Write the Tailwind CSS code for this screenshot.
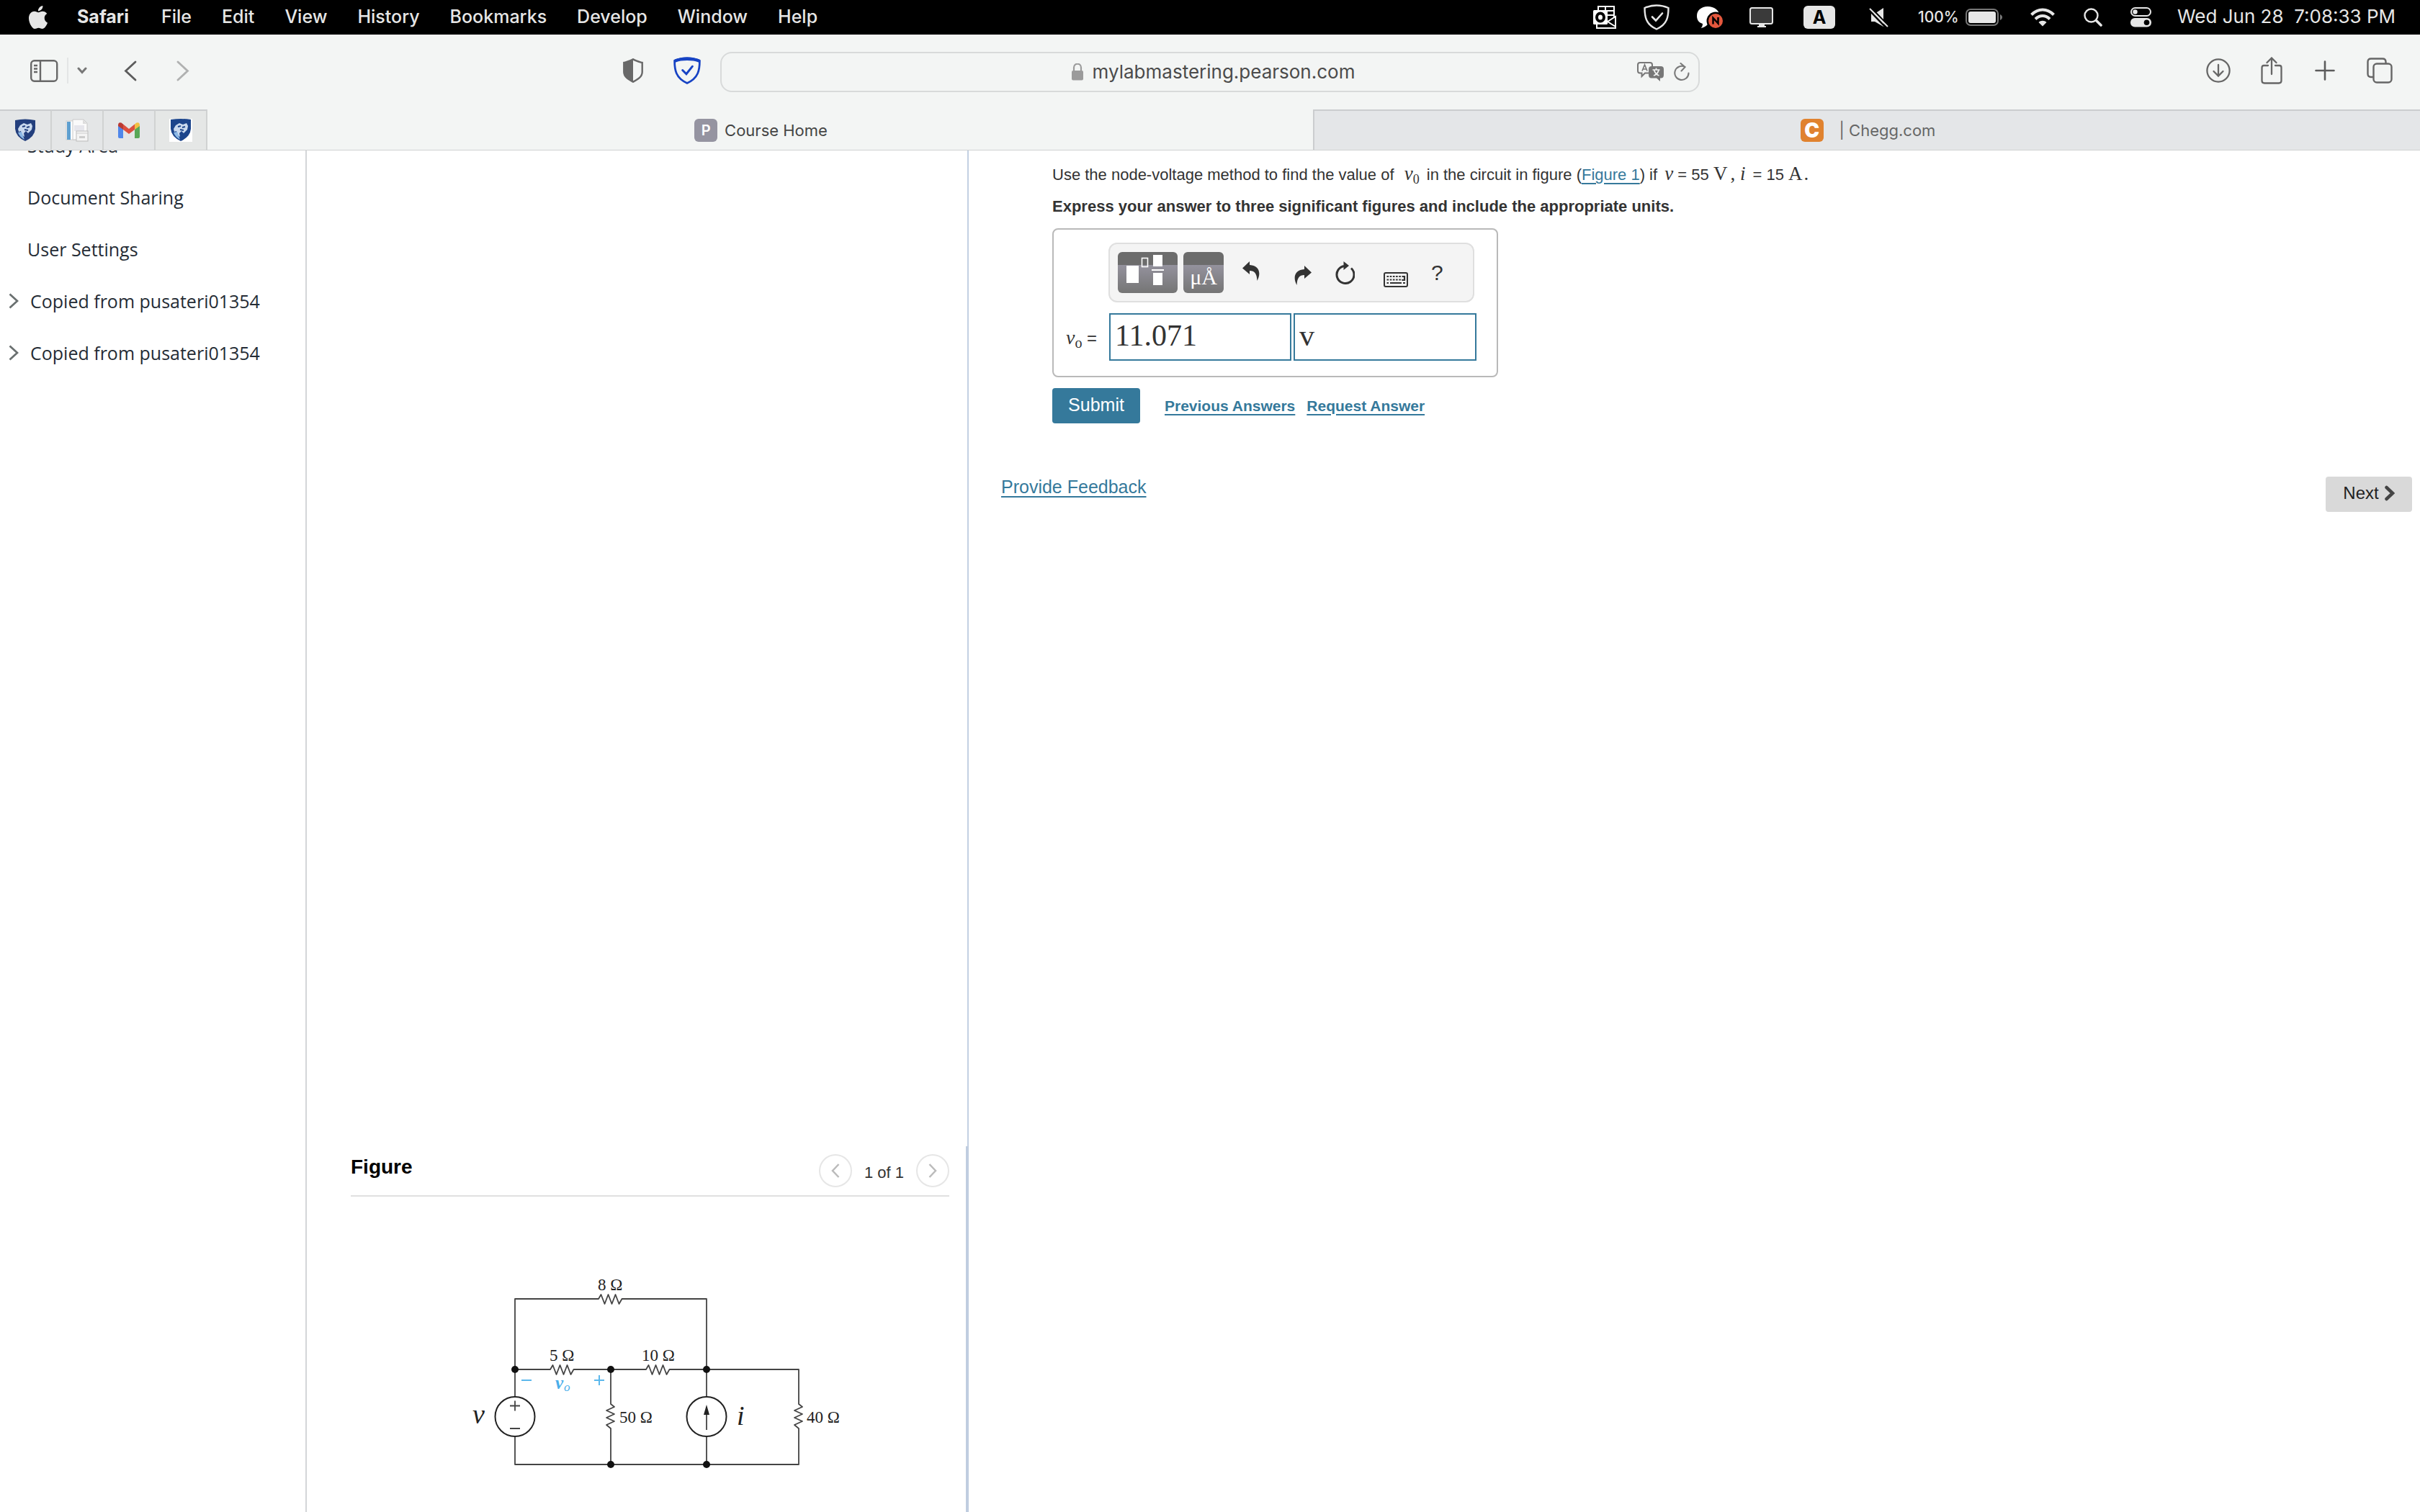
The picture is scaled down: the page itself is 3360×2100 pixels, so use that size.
<!DOCTYPE html>
<html lang="en">
<head>
<meta charset="utf-8">
<title>Course Home</title>
<script src="https://cdn.jsdelivr.net/npm/@tailwindcss/browser@4"></script>
</head>
<body class="min-h-screen flex flex-col bg-white font-['Liberation_Sans',sans-serif] text-[#333]">

<!-- System menu bar -->
<header class="h-12 bg-black text-[#e6e6e6] flex items-center pl-[37px] pr-8 font-['Inter',sans-serif] text-[26px] leading-[46px] whitespace-pre">
  <svg class="size-8 mr-[38px]" viewBox="0 0 24 24" fill="#e6e6e6"><path d="M12.152 6.896c-.948 0-2.415-1.078-3.96-1.04-2.04.027-3.91 1.183-4.961 3.014-2.117 3.675-.546 9.103 1.519 12.09 1.013 1.454 2.208 3.09 3.792 3.039 1.52-.065 2.09-.987 3.935-.987 1.831 0 2.35.987 3.96.948 1.637-.026 2.676-1.48 3.676-2.948 1.156-1.688 1.636-3.325 1.662-3.415-.039-.013-3.182-1.221-3.22-4.857-.026-3.04 2.48-4.494 2.597-4.559-1.429-2.09-3.623-2.324-4.39-2.376-2-.156-3.675 1.09-4.61 1.09zM15.53 3.83c.843-1.012 1.4-2.427 1.245-3.83-1.207.052-2.662.805-3.532 1.818-.78.896-1.454 2.338-1.273 3.714 1.338.104 2.715-.688 3.559-1.701"/></svg>
  <nav class="flex gap-[42px] pb-0.5 text-[25px] font-medium" aria-label="Menu bar"><button class="mr-[3px] font-bold">Safari</button><button>File</button><button>Edit</button><button>View</button><button>History</button><button>Bookmarks</button><button>Develop</button><button>Window</button><button>Help</button></nav>
  <div class="ml-auto flex items-center">
    <svg class="w-8 h-8 mr-[38px]" viewBox="0 0 32 32" fill="none" stroke="#fff" stroke-width="2"><path d="M7 7V1H29V16M17 1V14M18 7H29M19 13H29M5 25V31H31V15L20 22L31 29M20 22L15 25"/><rect x="0" y="6" width="20" height="20" rx="1.5" fill="#fff" stroke="none"/><ellipse cx="10" cy="16" rx="5" ry="5.500" stroke="#000" stroke-width="4"/></svg>
    <svg class="w-9 h-9 mr-[38px]" viewBox="0 0 36 36" fill="none" stroke="#e6e6e6" stroke-width="2.4" stroke-linecap="round"><path d="M18 1.500C12 1.500 6 3 1.500 5C1.500 17 3 28 18 34.500C33 28 34.500 17 34.500 5C30 3 24 1.500 18 1.500Z"/><path d="M12 17.500L17 22.500L26 12.500" stroke-width="2.600"/></svg>
    <svg class="w-9 h-8 mr-[37px]" viewBox="0 0 36 32"><path d="M15 1C6 1 0 6.500 0 14C0 20 3 23.500 8 25C8 28 7 30 5.500 31C10 30.500 13 28 15 26C25 25 31 20 31 13C31 6 24 1 15 1Z" fill="#fff"/><circle cx="26" cy="21" r="12.500" fill="#000"/><circle cx="26" cy="21" r="10" fill="#e4573d"/><path d="M22.500 25.500V17L29.500 24.500V16" fill="none" stroke="#000" stroke-width="2.500"/></svg>
    <svg class="w-[33px] h-7 mr-[42px]" viewBox="0 0 33 28"><rect x="1" y="1" width="31" height="22" rx="2.500" fill="#3a3a3a" stroke="#e6e6e6" stroke-width="2"/><path d="M13 24H21V26H23V28H11V26H13Z" fill="#e6e6e6"/></svg>
    <span class="w-11 h-8 mr-[47px] rounded-md bg-[#e6e6e6] text-black font-bold text-[25px] leading-8 text-center">A</span>
    <svg class="w-[27px] h-[27px] mr-[41px]" viewBox="0 0 27 27"><path d="M3 8H8L20 0V26L8 19H3Z" fill="#e6e6e6"/><path d="M-1 2L24 28M2 -1L28 26" stroke="#000" stroke-width="2.500"/><path d="M1 1L26 26" stroke="#e6e6e6" stroke-width="2"/></svg>
    <span class="w-[66px] text-[21px] font-medium">100%</span>
    <svg class="w-[52px] h-6 mr-[38px]" viewBox="0 0 52 24"><rect x="1" y="1" width="44" height="22" rx="6" fill="none" stroke="#777" stroke-width="2"/><rect x="4" y="4" width="38" height="16" rx="3" fill="#e6e6e6"/><path d="M48 8C52 9.500 52 14.500 48 16Z" fill="#777"/></svg>
    <svg class="w-[34px] h-[26px] mr-10" viewBox="0 0 34 26" fill="none" stroke="#e6e6e6" stroke-width="4"><path d="M1.500 9.500C10.500 0 23.500 0 32.500 9.500"/><path d="M7 15.500C13 9.500 21 9.500 27 15.500"/><path d="M11.500 20C14.500 17 19.500 17 22.500 20L17 25.500Z" fill="#e6e6e6" stroke="none"/></svg>
    <svg class="w-[26px] h-[26px] mr-[39px]" viewBox="0 0 26 26" fill="none" stroke="#e6e6e6" stroke-linecap="round"><circle cx="10.500" cy="10.500" r="9" stroke-width="2.400"/><path d="M17.500 17.500L24 24" stroke-width="3.600"/></svg>
    <svg class="w-[29px] h-7 mr-9" viewBox="0 0 29 28"><rect x="1" y="1" width="27" height="11" rx="5.500" fill="none" stroke="#e6e6e6" stroke-width="2"/><circle cx="6.500" cy="6.500" r="3.200" fill="#e6e6e6"/><rect x="0" y="15" width="29" height="12.500" rx="6" fill="#e6e6e6"/><circle cx="22.500" cy="21.200" r="3.800" fill="#000"/></svg>
    <time class="w-[305px] pb-0.5 text-[26px]">Wed Jun 28  7:08:33 PM</time>
  </div>
</header>

<!-- Browser toolbar -->
<div class="h-26 bg-[#f3f5f4] grid grid-cols-[1fr_40.5%_1fr] items-center text-[#666]">
  <div class="flex items-center pl-[42px] pr-[27px] pb-1">
    <button aria-label="Sidebar"><svg class="w-[39px] h-[31px]" viewBox="0 0 39 31" fill="none" stroke="#686868" stroke-width="2.400"><rect x="1.200" y="1.200" width="36" height="28.500" rx="4.500"/><path d="M14 1V30M5 8H10M5 12.500H10M5 17H10"/></svg></button>
    <span class="w-0.5 h-9 bg-[#e3e5e5] ml-3"></span>
    <button class="ml-3" aria-label="Tab groups"><svg class="w-[14px] h-[10px]" viewBox="0 0 14 10" fill="none" stroke="#777" stroke-width="3" stroke-linecap="round"><path d="M2 2L7 7.500L12 2"/></svg></button>
    <button class="ml-[51px]" aria-label="Back"><svg class="w-[18px] h-[29px]" viewBox="0 0 18 29" fill="none" stroke="#5c5c5c" stroke-width="2.800" stroke-linecap="round"><path d="M16 2L2.500 14.500L16 27"/></svg></button>
    <button class="ml-[55px]" aria-label="Forward"><svg class="w-[18px] h-[29px]" viewBox="0 0 18 29" fill="none" stroke="#b0b1b1" stroke-width="2.800" stroke-linecap="round"><path d="M2 2L15.500 14.500L2 27"/></svg></button>
    <button class="ml-auto" aria-label="Privacy report"><svg class="w-[28px] h-[34px]" viewBox="0 0 28 34"><path d="M14 1.300C10 4 5 5 1.300 6V19C1.300 26 8 29.500 14 32.700C20 29.500 26.700 26 26.700 19V6C23 5 18 4 14 1.300Z" fill="none" stroke="#686868" stroke-width="2.400"/><path d="M14 1V33C8 30 1 26 1 19V6C5 5 10 4 14 1Z" fill="#686868"/></svg></button>
    <button class="ml-[42px]" aria-label="AdGuard"><svg class="w-[38px] h-[38px]" viewBox="0 0 36 36" fill="none" stroke="#1743c4" stroke-width="2.600" stroke-linecap="round"><path d="M18 1.500C12 1.500 6 3 1.500 5C1.500 17 3 28 18 34.500C33 28 34.500 17 34.500 5C30 3 24 1.500 18 1.500Z"/><path d="M3 5C10 2 26 2 33 5" stroke-width="4"/><path d="M12 17.500L17 22.500L25 12.500" stroke-width="2.800"/></svg></button>
  </div>
  <div class="h-14 border-2 border-[#d8dada] rounded-2xl flex items-center pr-3 text-[#4b4b4b]">
    <label for="address" class="ml-[486px] shrink-0" aria-label="Address"><svg class="w-4 h-6" viewBox="0 0 16 24"><rect x="0" y="10" width="16" height="13.500" rx="2" fill="#9b9b9b"/><path d="M3 10V6C3 -1 13 -1 13 6V10" fill="none" stroke="#9b9b9b" stroke-width="2.200"/></svg></label>
    <input id="address" value="mylabmastering.pearson.com" class="ml-[13px] min-w-0 flex-1 bg-transparent outline-none font-['Inter',sans-serif] text-[26px] leading-10">
    <button aria-label="Translate"><svg class="w-[37px] h-[28px]" viewBox="0 0 37 28"><path d="M16 15.500H11L6.500 20V15.500H4Q1 15.500 1 12.500V4Q1 1 4 1H18Q21 1 21 4V6" fill="none" stroke="#777" stroke-width="2"/><path d="M7 12.500L10.500 4L14 12.500M8 10H13" fill="none" stroke="#777" stroke-width="1.700"/><path d="M20 6H33Q37 6 37 10V18Q37 22.500 33 22.500H32V27L27 22.500H20Q16 22.500 16 18V10Q16 6 20 6Z" fill="#777"/><path d="M21.500 11H31.500M26.500 8.500V11M23 19Q29 17 30 11M30.500 19Q25 17 23.500 11" fill="none" stroke="#f3f5f4" stroke-width="1.700"/></svg></button>
    <button class="ml-[14px]" aria-label="Reload"><svg class="w-[22px] h-[26px]" viewBox="0 0 22 26" fill="none" stroke="#7a7a7a" stroke-width="2.100" stroke-linecap="round"><path d="M15.500 6A9.600 9.600 0 1 0 20.500 14.500M9.500 1L15.500 6.200L10.500 11.500"/></svg></button>
  </div>
  <div class="flex items-center justify-end pr-[38px] pb-1">
    <button aria-label="Downloads"><svg class="w-[34px] h-[34px]" viewBox="0 0 34 34" fill="none" stroke="#666" stroke-width="2.300" stroke-linecap="round"><circle cx="17" cy="17" r="15.600"/><path d="M17 9V24M10.500 18L17 24.500L23.500 18"/></svg></button>
    <button class="ml-[42px]" aria-label="Share"><svg class="w-[30px] h-[38px]" viewBox="0 0 30 38" fill="none" stroke="#666" stroke-width="2.300" stroke-linecap="round"><path d="M10 12H4Q1.500 12 1.500 15V33Q1.500 36.500 5 36.500H25Q28.500 36.500 28.500 33V15Q28.500 12 26 12H20M15 24V2M8.500 8L15 1.500L21.500 8"/></svg></button>
    <button class="ml-[45px]" aria-label="New tab"><svg class="w-[28px] h-[28px]" viewBox="0 0 28 28" fill="none" stroke="#5c5c5c" stroke-width="2.600" stroke-linecap="round"><path d="M14 1.500V26.500M1.500 14H26.500"/></svg></button>
    <button class="ml-[44px]" aria-label="Tab overview"><svg class="w-[36px] h-[36px]" viewBox="0 0 36 36" fill="none" stroke="#666" stroke-width="2.400"><path d="M9 27H6Q1.500 27 1.500 22.500V6Q1.500 1.500 6 1.500H22Q26.500 1.500 26.500 6V8"/><rect x="9.500" y="8.500" width="25" height="26" rx="4.500"/></svg></button>
  </div>
</div>

<!-- Tab strip -->
<nav class="h-[57px] flex border-b border-[#d0d2d2] bg-[#f3f5f4] font-['Inter',sans-serif] text-[22px] text-[#454545]" aria-label="Tabs">
  <a href="#" aria-label="Penn State" class="w-18 flex items-center justify-center border-t-2 border-t-[#cbcdcf] border-r-2 border-r-[#d0d2d2] bg-[#e4e6e7]"><svg class="size-8" viewBox="0 0 32 32"><path d="M2 2Q16 -1 30 2V14Q29 25 16 31Q3 25 2 14Z" fill="#233f7d"/><path d="M6 14L9 9L14 6L19 8L24 6L26 10L25 15L20 20L17 17L14 20L15 25L11 22L10 17L7 18Z" fill="#c9d9ee"/><path d="M12 11L16 10M18 12L22 11M15 15L20 16" stroke="#233f7d" stroke-width="2"/><path d="M6 19L11 18L15 29Q8 25 6 19Z" fill="#8cb9e6"/></svg></a>
  <a href="#" aria-label="Documents" class="w-18 flex items-center justify-center border-t-2 border-t-[#cbcdcf] border-r-2 border-r-[#d0d2d2] bg-[#e4e6e7]"><svg class="size-8" viewBox="0 0 32 32"><rect x="1" y="3" width="15" height="26" fill="#fff" stroke="#ccc"/><rect x="2" y="4" width="5" height="25" fill="#5fa0d0"/><path d="M10 1H25L30 6V29H10Z" fill="#fafafa" stroke="#c8c8c8"/><path d="M24 1V7H30" fill="#ddd"/><rect x="12" y="9" width="14" height="8" fill="#e6e6ec"/><rect x="15" y="17" width="16" height="14" fill="#f4f4f4" stroke="#bbb"/><path d="M15 20H31" stroke="#ccc"/><rect x="19" y="24" width="8" height="3" fill="#ccc"/></svg></a>
  <a href="#" aria-label="Gmail" class="w-18 flex items-center justify-center border-t-2 border-t-[#cbcdcf] border-r-2 border-r-[#d0d2d2] bg-[#e4e6e7]"><svg class="w-[30px] h-[22px]" viewBox="0 0 30 22"><path d="M0 4L7 9V22H2Q0 22 0 20Z" fill="#5087ea"/><path d="M30 4L23 9V22H28Q30 22 30 20Z" fill="#59a758"/><path d="M7 2.500L15 9L23 2.500V10L15 16L7 10Z" fill="#dc5040"/><path d="M7 10V2.500L4.500 .5Q0 -1 0 4V5Z" fill="#b93a33"/><path d="M23 10V2.500L25.500 .5Q30 -1 30 4V5Z" fill="#f2c043"/></svg></a>
  <a href="#" aria-label="Penn State" class="w-18 flex items-center justify-center border-t-2 border-t-[#cbcdcf] border-r-2 border-r-[#d0d2d2] bg-[#e5e7e6]"><svg class="size-8 bg-white" viewBox="0 0 32 32"><path d="M2 1Q16 -1 30 1V14Q29 25 16 31Q3 25 2 14Z" fill="#1c458c"/><path d="M6 14L9 9L14 6L19 8L24 6L26 10L25 15L20 20L17 17L14 20L15 25L11 22L10 17L7 18Z" fill="#c9d9ee"/><path d="M12 11L16 10M18 12L22 11M15 15L20 16" stroke="#1c458c" stroke-width="2"/><path d="M6 19L11 18L15 29Q8 25 6 19Z" fill="#8cb9e6"/></svg></a>
  <a href="#" class="flex-1 flex items-center justify-center gap-[10px] pl-0.5 pt-0.5"><span class="size-8 rounded-md bg-[#9594a1] text-white text-[20px] leading-8 font-semibold text-center">P</span>Course Home</a>
  <a href="#" class="flex-1 flex items-center justify-center gap-[22px] pl-0.5 border-t-2 border-t-[#cbcdcf] border-l-2 border-l-[#cbcdcf] bg-[#e4e6e8] text-[#666]"><span class="size-8 rounded-md bg-[#e0822f] text-white text-[28px] leading-8 font-black text-center">C</span>| Chegg.com</a>
</nav>

<!-- Page -->
<div class="flex-1 flex">
  <aside class="w-[426px] shrink-0 border-r-2 border-[#d4d6d8] overflow-hidden">
    <nav class="-mt-[43px] flex flex-col font-['Open_Sans',sans-serif] text-[25px] leading-[72px] text-[#252c35]" aria-label="Course">
      <a href="#" class="pl-[38px]">Study Area</a>
      <a href="#" class="pl-[38px]">Document Sharing</a>
      <a href="#" class="pl-[38px]">User Settings</a>
      <a href="#" class="pl-3 flex items-center gap-4"><svg class="w-[14px] h-[22px]" viewBox="0 0 14 22" fill="none" stroke="#6a7070" stroke-width="2.800"><path d="M1.500 1.500L12 11L1.500 20.500"/></svg>Copied from pusateri01354</a>
      <a href="#" class="pl-3 flex items-center gap-4"><svg class="w-[14px] h-[22px]" viewBox="0 0 14 22" fill="none" stroke="#6a7070" stroke-width="2.800"><path d="M1.500 1.500L12 11L1.500 20.500"/></svg>Copied from pusateri01354</a>
    </nav>
  </aside>

  <section class="w-[919px] shrink-0 flex flex-col justify-end bg-[linear-gradient(#c3d0e2,#c3d0e2)] bg-[length:2px_100%] bg-right bg-no-repeat" aria-label="Figure">
    <div class="h-[508px] border-r-4 border-[#c0cde0] pl-[61px] pr-[23px]">
      <div class="h-[70px] flex items-center border-b-2 border-[#e0e0e0]">
        <h2 class="text-[28px] leading-8 font-bold text-black mb-2.5">Figure</h2>
        <button class="ml-auto size-[46px] rounded-full border-2 border-[#e6e6e6] flex items-center justify-center" aria-label="Previous figure"><svg class="w-3 h-5" viewBox="0 0 12 20" fill="none" stroke="#bbb" stroke-width="2.500"><path d="M10.500 1L2 10L10.500 19"/></svg></button>
        <span class="mx-[17px] mt-1.5 text-[22px] leading-7">1 of 1</span>
        <button class="size-[46px] rounded-full border-2 border-[#e6e6e6] flex items-center justify-center" aria-label="Next figure"><svg class="w-3 h-5" viewBox="0 0 12 20" fill="none" stroke="#bbb" stroke-width="2.500"><path d="M1.500 1L10 10L1.500 19"/></svg></button>
      </div>
      <!-- Circuit diagram -->
      <svg class="ml-[153px] mt-[98px] w-[540px] h-[300px] font-['Liberation_Serif',serif] text-[23px]" viewBox="640 1760 540 300" fill="#222" role="img" aria-label="Circuit with two sources and five resistors">
        <g fill="none" stroke="#444" stroke-width="1.800" stroke-linejoin="round">
          <path d="M715 1940V1804H831l3.500-6 5 13 5-13 5 13 5-13 5 13 4-7H981V1940"/>
          <path d="M715 1902H764l3.500-6 5 13 5-13 5 13 5-13 5 13 4-7H897l3.500-6 5 13 5-13 5 13 5-13 5 13 4-7H1109V1950l5 4-11 5 11 5-11 5 11 5-11 5 6 5V2034H715V1995"/>
          <path d="M848 1902V1950l5 4-11 5 11 5-11 5 11 5-11 5 6 5V2034M981 1995V2034"/>
          <circle cx="715" cy="1967.500" r="27.500" stroke="#222" stroke-width="2"/>
          <circle cx="981" cy="1967.500" r="27.500" stroke="#222" stroke-width="2"/>
          <path d="M708 1952.500H722M715 1945.500V1959.500M708 1984H722M981 1986V1960"/>
        </g>
        <path d="M981 1951L985 1965H977Z"/>
        <g fill="#111"><circle cx="715" cy="1902" r="5"/><circle cx="848" cy="1902" r="5"/><circle cx="981" cy="1902" r="5"/><circle cx="848" cy="2034" r="5"/><circle cx="981" cy="2034" r="5"/></g>
        <text x="830" y="1792">8 Ω</text><text x="763" y="1890">5 Ω</text><text x="891" y="1890">10 Ω</text><text x="860" y="1976">50 Ω</text><text x="1120" y="1976">40 Ω</text>
        <g font-style="italic" font-size="38"><text x="656" y="1977">v</text><text x="1023" y="1979">i</text></g>
        <path d="M724 1917H738M825 1917H839M832 1910V1924" fill="none" stroke="#5cb8ec" stroke-width="2"/>
        <g fill="#4aaeea" font-style="italic"><text x="771" y="1929" font-size="25" font-weight="bold">v</text><text x="783" y="1932" font-size="17">o</text></g>
      </svg>
    </div>
  </section>

  <main class="flex-1 min-w-0 pl-[45px] pt-3">
    <div class="pl-[71px]">
      <p class="text-[22px] leading-11 h-11 whitespace-nowrap">Use the node-voltage method to find the value of <i class="ml-2 font-['Liberation_Serif',serif] text-[27px] leading-none">v</i><sub class="mr-1 font-['Liberation_Serif',serif] text-[18px] leading-none">0</sub> in the circuit in figure (<a href="#" class="text-[#35799b] underline underline-offset-4">Figure 1</a>) if <i class="ml-1 font-['Liberation_Serif',serif] text-[27px] leading-none">v</i> = 55 <span class="font-['Liberation_Serif',serif] text-[27px] leading-none">V<span class="ml-1">,</span> <i>i</i></span> <span class="ml-1">= 15</span> <span class="font-['Liberation_Serif',serif] text-[27px] leading-none">A<span class="ml-0.5">.</span></span></p>
      <p class="text-[22px] leading-11 font-bold whitespace-nowrap">Express your answer to three significant figures and include the appropriate units.</p>
      <div class="mt-2 w-[619px] h-[207px] border-2 border-[#b9b9b9] rounded-lg pl-[17px] pt-[18px]">
        <div class="ml-[59px] w-[508px] h-[83px] rounded-xl border-2 border-[#dfdfdf] bg-[#f4f4f4] flex items-center pl-[11px] text-[#333]">
          <button class="w-[83px] h-[57px] rounded-md bg-linear-to-b from-[#6c6c6c] from-31% via-[#94929d] via-32% to-[#757575]" aria-label="Templates"><svg class="w-[83px] h-[57px]" viewBox="0 0 83 57" fill="#fff"><path d="M12 19H29V43H12ZM49 4H62V20H49ZM49 29H62V46H49ZM47 24H64V26H47Z"/><rect x="33.500" y="8.500" width="8" height="12" fill="none" stroke="#fff" stroke-width="1.600"/></svg></button>
          <button class="ml-2 w-14 h-[57px] rounded-md bg-linear-to-b from-[#6c6c6c] from-31% via-[#94929d] via-32% to-[#757575] text-white font-['Liberation_Serif',serif] text-[30px] leading-8 pt-3" aria-label="Symbols">μÅ</button>
          <button class="ml-[26px] mb-1" aria-label="Undo"><svg class="w-6 h-[27px]" viewBox="0 0 24 27" fill="#333"><path d="M10 0L0 9.500L10 18V13C17 13 20 17 20.500 27C25.500 18 25 6 10 5Z"/></svg></button>
          <button class="ml-12 mt-2" aria-label="Redo"><svg class="w-6 h-[27px]" viewBox="0 0 24 27" fill="#333"><path d="M14 0L24 9.500L14 18V13C7 13 4 17 3.500 27C-1.500 18 -1 6 14 5Z"/></svg></button>
          <button class="ml-8" aria-label="Reset"><svg class="w-7 h-8" viewBox="0 0 28 32" fill="none" stroke="#333" stroke-width="3"><path d="M23 9.500A12 12 0 1 1 14 6.500"/><path d="M12.500 0L20 6L12.500 12Z" fill="#333" stroke="none"/></svg></button>
          <button class="ml-10 mt-5" aria-label="Keyboard shortcuts"><svg class="w-[34px] h-[21px]" viewBox="0 0 34 21" fill="none" stroke="#333"><rect x="1" y="1" width="32" height="19" rx="2" stroke-width="2"/><path d="M4.500 6H28" stroke-width="2.200" stroke-dasharray="2.600 1.600"/><path d="M4.500 10.500H26" stroke-width="2.200" stroke-dasharray="2.600 1.600"/><path d="M29 5V11H25.500M4.500 15H7M9 15H25M27 15H30" stroke-width="2.200"/></svg></button>
          <button class="ml-8 text-[30px] leading-9" aria-label="Help">?</button>
        </div>
        <div class="mt-[15px] flex items-center h-[66px]">
          <label for="value" class="w-[60px] mt-1 text-[24px] leading-8 whitespace-nowrap"><i class="font-['Liberation_Serif',serif] text-[28px] leading-none">v</i><sub class="font-['Liberation_Serif',serif] text-[20px] leading-none">o</sub> =</label>
          <input id="value" value="11.071" class="w-[253px] h-[66px] border-2 border-[#35799b] pl-1.5 pb-1 font-['Liberation_Serif',serif] text-[42px] leading-none outline-none">
          <input id="units" aria-label="Units" value="v" class="ml-[3px] w-[254px] h-[66px] border-2 border-[#35799b] pl-1.5 pb-1 font-['Liberation_Serif',serif] text-[42px] leading-none outline-none">
        </div>
      </div>
      <div class="mt-[15px] flex items-center">
        <button class="w-[122px] h-[49px] rounded-sm bg-[#35799b] text-white text-[25px] leading-7 pb-1">Submit</button>
        <a href="#" class="ml-[34px] text-[21px] leading-7 font-bold text-[#35799b] underline underline-offset-4">Previous Answers</a>
        <a href="#" class="ml-4 text-[21px] leading-7 font-bold text-[#35799b] underline underline-offset-4">Request Answer</a>
      </div>
    </div>
    <div class="mt-[72px] pr-[11px] flex items-start justify-between">
      <a href="#" class="text-[25px] leading-8 text-[#35799b] underline underline-offset-4">Provide Feedback</a>
      <button class="mt-0.5 w-[120px] h-[49px] rounded-sm bg-[#d9d9d9] text-[24px] leading-7 pb-1 flex items-center justify-center gap-2 text-[#222]">Next<svg class="w-[14px] h-[22px]" viewBox="0 0 14 22" fill="none" stroke="#444" stroke-width="4.500" stroke-linecap="round"><path d="M2.500 3L11 11L2.500 19"/></svg></button>
    </div>
  </main>
</div>
</body>
</html>
